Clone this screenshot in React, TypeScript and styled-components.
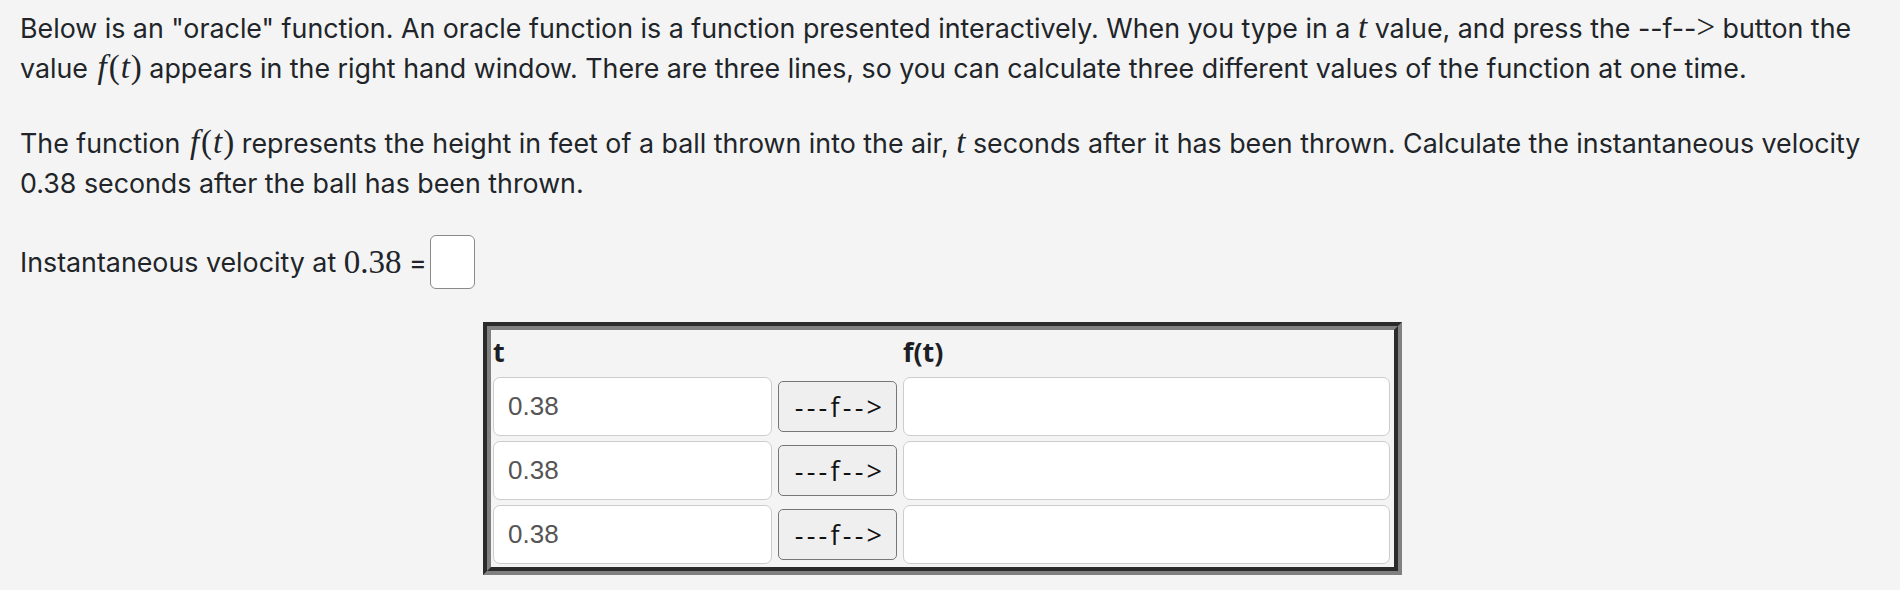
import React from 'react';
import styled, { createGlobalStyle } from 'styled-components';

const GlobalStyle = createGlobalStyle`
  html, body {
    margin: 0;
    padding: 0;
    background: #f4f4f4;
  }
`;

const Page = styled.div`
  box-sizing: border-box;
  width: 1900px;
  min-height: 590px;
  padding: 8px 35px 0 20px;
  font-family: Inter, "Liberation Sans", Arial, sans-serif;
  font-size: 26.8px;
  line-height: 40px;
  color: #212529;
`;

const Para = styled.p<{ $gap?: number }>`
  margin: 0 0 ${(p) => p.$gap ?? 35}px;
  white-space: nowrap;
`;

const MathText = styled.span<{ $italic?: boolean; $pad?: number }>`
  font-family: "Liberation Serif", "Times New Roman", serif;
  font-size: 33px;
  line-height: 1;
  font-style: ${(p) => (p.$italic ? 'italic' : 'normal')};
  padding: 0 ${(p) => p.$pad ?? 0}px;
`;

const AnswerRow = styled.div`
  display: flex;
  align-items: center;
  white-space: pre;
`;

const AnswerBox = styled.input`
  box-sizing: border-box;
  width: 45px;
  height: 54px;
  margin: 0 0 0 3px;
  border: 1.5px solid #8a8a8a;
  border-radius: 6px;
  background: #fff;
`;

const TableArea = styled.div`
  display: flex;
  justify-content: center;
  margin-top: 33px;
`;

const Frame = styled.div`
  border-style: solid;
  border-width: 4px;
  border-color: #2b2b2b #808080 #808080 #2b2b2b;
`;

const Board = styled.div`
  display: grid;
  grid-template-columns: 279px 119px 487px;
  grid-template-rows: 42px repeat(3, 59px);
  column-gap: 6px;
  row-gap: 5px;
  padding: 0 4px 3px 2px;
  border-style: solid;
  border-width: 4px;
  border-color: #808080 #2b2b2b #2b2b2b #808080;
`;

const HeadCell = styled.div`
  align-self: end;
  padding-bottom: 4px;
  font-family: "Open Sans", "Noto Sans", sans-serif;
  font-weight: 700;
  font-size: 27px;
  line-height: 32px;
  color: #1d1f24;
`;

const Field = styled.input<{ $tone?: string }>`
  box-sizing: border-box;
  width: 100%;
  height: 59px;
  margin: 0;
  padding: 0 14px;
  border: 1.5px solid #cdcdcd;
  border-radius: 7px;
  background: #fff;
  font-family: "Liberation Sans", Arial, sans-serif;
  font-size: 26px;
  color: ${(p) => p.$tone ?? '#555'};
  outline: none;
`;

const ArrowButton = styled.button`
  align-self: center;
  box-sizing: border-box;
  width: 119px;
  height: 51px;
  margin: 0;
  padding: 0 0 0 5px;
  border: 1.5px solid #777;
  border-radius: 5px;
  background: #efefef;
  font-family: "Open Sans", "Noto Sans", sans-serif;
  font-size: 27px;
  letter-spacing: 3.2px;
  color: #111;
`;

function FofT() {
  return (
    <>
      <MathText $italic $pad={2}>f</MathText>
      <MathText>(</MathText>
      <MathText $italic $pad={1}>t</MathText>
      <MathText>)</MathText>
    </>
  );
}

const rows = ['0.38', '0.38', '0.38'];

export default function App() {
  return (
    <>
      <GlobalStyle />
      <Page>
        <Para>
          Below is an "oracle" function. An oracle function is a function presented interactively. When you type in a{' '}
          <MathText $italic>t</MathText> value, and press the --f--<MathText>&gt;</MathText> button the
          <br />
          value <FofT /> appears in the right hand window. There are three lines, so you can calculate three different
          values of the function at one time.
        </Para>
        <Para $gap={32}>
          The function <FofT /> represents the height in feet of a ball thrown into the air,{' '}
          <MathText $italic>t</MathText> seconds after it has been thrown. Calculate the instantaneous velocity
          <br />
          0.38 seconds after the ball has been thrown.
        </Para>
        <AnswerRow>
          Instantaneous velocity at <MathText>0.38</MathText> =
          <AnswerBox type="text" aria-label="answer" />
        </AnswerRow>
        <TableArea>
          <Frame>
            <Board>
              <HeadCell>t</HeadCell>
              <HeadCell />
              <HeadCell>f(t)</HeadCell>
              {rows.map((v, i) => (
                <React.Fragment key={i}>
                  <Field type="text" defaultValue={v} />
                  <ArrowButton type="button">---f--&gt;</ArrowButton>
                  <Field type="text" $tone="#222" />
                </React.Fragment>
              ))}
            </Board>
          </Frame>
        </TableArea>
      </Page>
    </>
  );
}
